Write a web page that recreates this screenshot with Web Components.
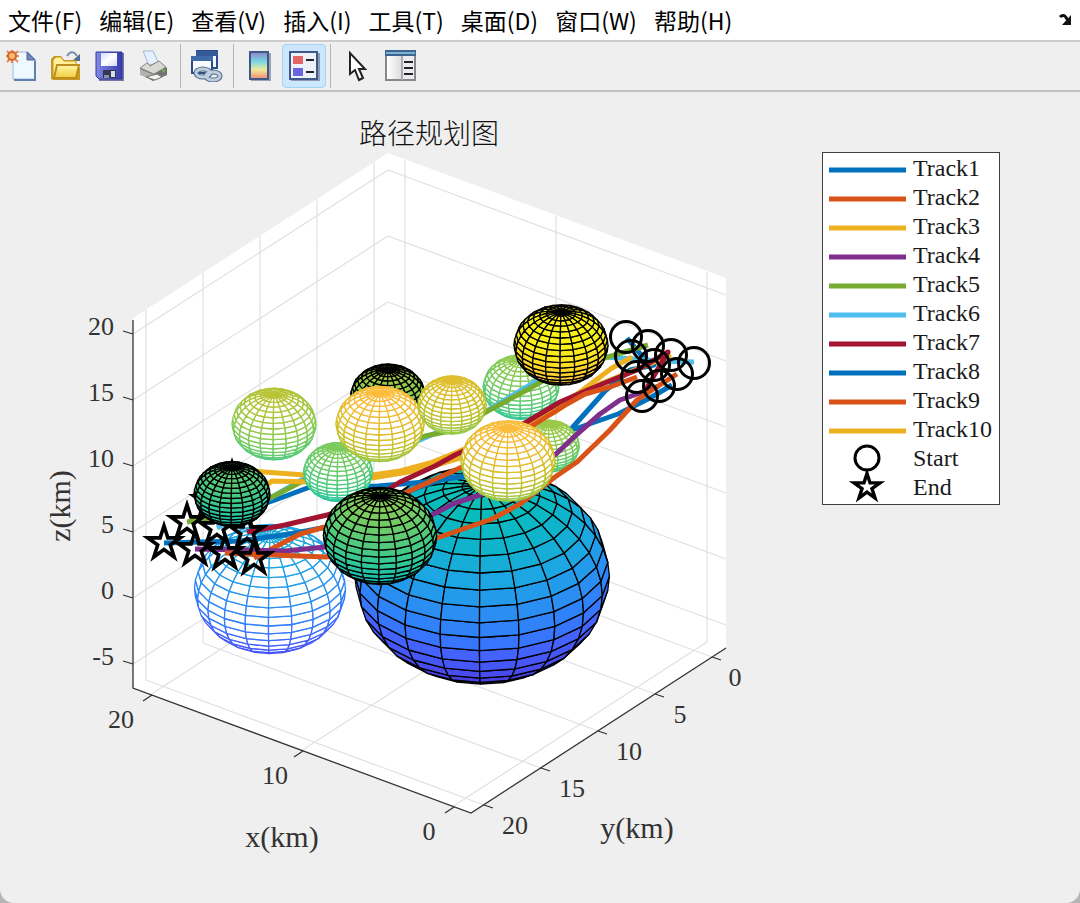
<!DOCTYPE html>
<html lang="zh-CN">
<head>
<meta charset="utf-8">
<title>Figure 1</title>
<style>
  body {
    margin: 0;
    background: #b4b4b4;
    font-family: "Noto Sans CJK SC", "Open Sans", sans-serif;
  }
</style>
</head>
<body>
<figure-window>
  <menu-bar slot="menu">
    <menu-item>文件(F)</menu-item>
    <menu-item>编辑(E)</menu-item>
    <menu-item>查看(V)</menu-item>
    <menu-item>插入(I)</menu-item>
    <menu-item>工具(T)</menu-item>
    <menu-item>桌面(D)</menu-item>
    <menu-item>窗口(W)</menu-item>
    <menu-item>帮助(H)</menu-item>
  </menu-bar>
  <tool-bar slot="tools">
    <tool-button icon="new" label="新建图窗"></tool-button>
    <tool-button icon="open" label="打开文件"></tool-button>
    <tool-button icon="save" label="保存图窗"></tool-button>
    <tool-button icon="print" label="打印图窗"></tool-button>
    <tool-separator></tool-separator>
    <tool-button icon="link" label="链接绘图"></tool-button>
    <tool-separator></tool-separator>
    <tool-button icon="colorbar" label="插入颜色栏"></tool-button>
    <tool-button icon="legend" label="插入图例" pressed></tool-button>
    <tool-separator></tool-separator>
    <tool-button icon="cursor" label="编辑绘图"></tool-button>
    <tool-button icon="inspector" label="属性检查器"></tool-button>
  </tool-bar>
  <path-plot></path-plot>
  <plot-legend slot="legend">
    <legend-entry color="#0072bd">Track1</legend-entry>
    <legend-entry color="#d95319">Track2</legend-entry>
    <legend-entry color="#edb120">Track3</legend-entry>
    <legend-entry color="#7e2f8e">Track4</legend-entry>
    <legend-entry color="#77ac30">Track5</legend-entry>
    <legend-entry color="#4dbeee">Track6</legend-entry>
    <legend-entry color="#a2142f">Track7</legend-entry>
    <legend-entry color="#0072bd">Track8</legend-entry>
    <legend-entry color="#d95319">Track9</legend-entry>
    <legend-entry color="#edb120">Track10</legend-entry>
    <legend-entry marker="circle">Start</legend-entry>
    <legend-entry marker="star">End</legend-entry>
  </plot-legend>
</figure-window>

<script>
const ICONS = {
  new: `
    <path d="M8 3h15l7 7v21H8z" fill="#8997b5"/>
    <path d="M7 2h15l7 7v20H7z" fill="#eef8ff" stroke="#9dbbdd"/>
    <path d="M21 2v8h8z" fill="#7588bd" stroke="#536291"/>
    <path d="M29 11v19H8" fill="none" stroke="#5f7fae" stroke-width="2"/>
    <g stroke="#e98a55" stroke-width="2"><path d="M6 0v13M0 6h13M1 1l11 11M12 1L1 12"/></g>
    <circle cx="6" cy="6" r="4" fill="#f6bd69" stroke="#d8632e" stroke-width="2"/>`,
  open: `
    <path d="M17 6c3-5 7-5 10 0" fill="none" stroke="#7890aa" stroke-width="2"/>
    <path d="M30 4v7h-8z" fill="#526d8d"/>
    <path d="M1 29V9l3-3h7l3 4h12v6l4 2v12H3z" fill="#c79a22"/>
    <path d="M3 26V10l3-3h5l3 4h12v7" fill="#fff099" stroke="#c39425"/>
    <path d="M7 15h22l-3 13H4z" fill="url(#open-fill)" stroke="#bd8e1e" stroke-width="2"/>
    <defs><linearGradient id="open-fill" x2="0" y2="1"><stop stop-color="#fff7a8"/><stop offset="1" stop-color="#f1cc3d"/></linearGradient></defs>`,
  save: `
    <path d="M3 3h27v28H5z" fill="#7478a3"/>
    <path d="M2 2h26v27H5l-3-3z" fill="url(#save-fill)" stroke="#3437a0"/>
    <path d="M7 3h16v13H7z" fill="url(#save-label)"/>
    <path d="M9 20h13v8H9z" fill="#343752"/><path d="M17 21h4v6h-4z" fill="#d7e0ed"/><path d="M10 25h5v3h-5z" fill="#8b92a8"/>
    <defs><linearGradient id="save-fill"><stop stop-color="#8389e8"/><stop offset="1" stop-color="#353ba8"/></linearGradient>
    <linearGradient id="save-label" x2="1" y2="1"><stop stop-color="#c8e0ff"/><stop offset=".5" stop-color="#fff"/><stop offset="1" stop-color="#d0d8f4"/></linearGradient></defs>`,
  print: `
    <path d="M5 1h10l6 13-9 4z" fill="#e3f0ff" stroke="#a5b9d2"/>
    <path d="M2 19l7-6 3 2 9-4 8 7v7l-14 6-13-7z" fill="#6d6d68"/>
    <path d="M2 18l7-5 3 3 9-5 7 6-12 7z" fill="#d9d9d4" stroke="#898984"/>
    <path d="M2 19l14 6v5L2 25z" fill="#b4b4af"/><path d="M16 25l12-7v7l-12 5z" fill="#777772"/>
    <path d="M8 27l9 3 7-3-5-3z" fill="#f4f4ef" stroke="#777"/><path d="M24 20l3 1" stroke="#74b942" stroke-width="2"/>`,
  link: `
    <path d="M6 1h20v17H6z" fill="#f6f8fc" stroke="#294c8b" stroke-width="2"/><path d="M5 1h22v5H5z" fill="#36599a"/>
    <path d="M1 7h20v16H1z" fill="#f9fbff" stroke="#294c8b" stroke-width="2"/><path d="M0 6h22v5H0z" fill="#416aa9"/>
    <g fill="none" stroke="#526985" stroke-width="5"><ellipse cx="12" cy="23" rx="7" ry="4"/><ellipse cx="22" cy="26" rx="7" ry="4"/></g>
    <g fill="none" stroke="#bdcde0" stroke-width="3"><ellipse cx="12" cy="23" rx="7" ry="4"/><ellipse cx="22" cy="26" rx="7" ry="4"/></g>`,
  colorbar: `
    <path d="M7 3h20v28H7z" fill="#9aa3b2"/>
    <path d="M6 2h18v27H6z" fill="url(#bar-fill)" stroke="#405888" stroke-width="2"/>
    <defs><linearGradient id="bar-fill" x2="0" y2="1"><stop stop-color="#8f83cb"/><stop offset=".35" stop-color="#79d6e5"/><stop offset=".65" stop-color="#f0e99a"/><stop offset="1" stop-color="#ef8b70"/></linearGradient></defs>`,
  legend: `
    <path d="M3 3h29v28H3z" fill="#8d9ab0"/>
    <path d="M2 2h27v27H2z" fill="#edf1fa" stroke="#405888" stroke-width="2"/>
    <path d="M5 6h10v8H5z" fill="#e46564"/><path d="M5 18h10v8H5z" fill="#6867dd"/>
    <path d="M18 10h8M18 22h8" stroke="#222" stroke-width="2"/>`,
  cursor: `<path d="M9 3v21l5-4 4 10 4-2-4-9h6z" fill="#fff" stroke="#222" stroke-width="2"/>`,
  inspector: `
    <path d="M1 1h29v29H1z" fill="#ececec" stroke="#85878c" stroke-width="2"/>
    <path d="M0 0h31v6H0z" fill="#3d668e"/><path d="M1 2h29v2H1z" fill="#7fb0d3"/>
    <path d="M2 6h14v23H2z" fill="url(#pane)"/><path d="M17 6v24" stroke="#a8abb2" stroke-width="2"/>
    <path d="M19 12h9M19 18h9M19 24h9" stroke="#222" stroke-width="2"/>
    <defs><linearGradient id="pane"><stop stop-color="#fff"/><stop offset="1" stop-color="#ddd"/></linearGradient></defs>`
};

const STAR = '0,-20 4.5,-6 19,-6 7.3,2.4 11.8,16.2 0,7.6 -11.8,16.2 -7.3,2.4 -19,-6 -4.5,-6';

/**
 * Base class: renders the class's static template into an open shadow root.
 */
class FigureElement extends HTMLElement {
  constructor() {
    super();
    this.attachShadow({mode: 'open'});
    this.shadowRoot.innerHTML = this.constructor.template;
  }
}

class FigureWindow extends FigureElement {
  static get template() {
    return `
      <style>
        :host {
          display: flex;
          flex-direction: column;
          min-height: 100vh;
          background: #efefef;
          border-radius: 0 0 14px 14px;
        }
        main {
          display: flex;
          align-items: flex-start;
          padding-right: 80px;
        }
        ::slotted(path-plot) { flex: 1; min-width: 0; }
        ::slotted(plot-legend) { margin-top: 60px; }
      </style>
      <slot name="menu"></slot>
      <slot name="tools"></slot>
      <main><slot></slot><slot name="legend"></slot></main>`;
  }
}

class MenuBar extends FigureElement {
  static get template() {
    return `
      <style>
        :host {
          display: flex;
          justify-content: space-between;
          align-items: center;
          height: 40px;
          padding: 0 6px 0 8px;
          background: #fff;
          border-bottom: 2px solid #cdcdcd;
        }
        nav { display: flex; gap: 17px; }
        button { padding: 0; border: 0; background: none; }
        svg { display: block; }
      </style>
      <nav aria-label="菜单"><slot></slot></nav>
      <button aria-label="停靠图窗">
        <svg width="16" height="16" viewBox="0 0 16 16">
          <path d="M2 5q4-4 7 2l3 2" fill="none" stroke="#111" stroke-width="3"/>
          <path d="M13 3v10H4z" fill="#111"/>
        </svg>
      </button>`;
  }
}

class MenuItem extends FigureElement {
  static get template() {
    return `
      <style>
        :host { display: block; }
        button {
          padding: 0;
          border: 0;
          background: none;
          color: #000;
          font: inherit;
          font-size: 23px;
          line-height: 38px;
          white-space: nowrap;
        }
      </style>
      <button><slot></slot></button>`;
  }
}

class ToolBar extends FigureElement {
  static get template() {
    return `
      <style>
        :host {
          display: flex;
          align-items: center;
          height: 48px;
          border-bottom: 2px solid #c2c2c2;
        }
      </style>
      <slot></slot>`;
  }
}

class ToolSeparator extends FigureElement {
  static get template() {
    return `
      <style>
        :host { width: 9px; height: 44px; }
        div { width: 1px; height: 100%; margin: 0 auto; background: #b5b5b5; }
      </style>
      <div></div>`;
  }
}

class ToolButton extends FigureElement {
  static get template() {
    return `
      <style>
        :host { display: block; }
        button {
          display: grid;
          place-items: center;
          box-sizing: border-box;
          width: 44px;
          height: 44px;
          padding: 0;
          border: 1px solid transparent;
          border-radius: 4px;
          background: none;
        }
        :host([pressed]) button { background: #cce6fd; border-color: #a3d2f6; }
      </style>
      <button><svg width="32" height="32" viewBox="0 0 32 32"></svg></button>`;
  }

  connectedCallback() {
    const button = this.shadowRoot.querySelector('button');
    button.setAttribute('aria-label', this.getAttribute('label'));
    button.setAttribute('aria-pressed', this.hasAttribute('pressed'));
    button.firstChild.innerHTML = ICONS[this.getAttribute('icon')];
  }
}

class PlotLegend extends FigureElement {
  static get template() {
    return `
      <style>
        :host {
          display: block;
          box-sizing: border-box;
          width: 178px;
          padding: 1px 6px 2px;
          border: 1px solid #404040;
          background: #fff;
        }
      </style>
      <slot></slot>`;
  }
}

class LegendEntry extends FigureElement {
  static get template() {
    return `
      <style>
        :host {
          display: flex;
          align-items: center;
          gap: 7px;
          height: 29px;
          color: #1a1a1a;
          font: 24px/29px "Liberation Serif", serif;
        }
        svg { flex: none; overflow: visible; }
      </style>
      <svg width="77" height="29" viewBox="0 0 77 29"></svg>
      <span><slot></slot></span>`;
  }

  connectedCallback() {
    const marker = this.getAttribute('marker');
    const svg = this.shadowRoot.querySelector('svg');
    if (marker === 'circle') {
      svg.innerHTML = '<circle cx="38" cy="14" r="12" fill="none" stroke="#000" stroke-width="3"/>';
    } else if (marker === 'star') {
      svg.innerHTML = `<polygon points="${STAR}" transform="translate(38 14) scale(.68)" fill="none" stroke="#000" stroke-width="5"/>`;
    } else {
      svg.innerHTML = `<path d="M0 16h77" stroke="${this.getAttribute('color')}" stroke-width="5"/>`;
    }
  }
}

// Screen vectors of one km along each axis
const EX = [-15.05, -5.6];
const EY = [-11.4, 7.38];
const EZ = -13.24;

const PARULA = [
  [0, 62, 38, 168], [.1, 72, 66, 231], [.15, 71, 84, 246], [.2, 67, 98, 254],
  [.25, 52, 122, 253], [.3, 46, 135, 247], [.4, 27, 167, 225], [.5, 8, 188, 188],
  [.6, 63, 202, 137], [.7, 140, 203, 80], [.8, 209, 191, 39], [.88, 254, 188, 60],
  [1, 249, 240, 25]
];

const parula = t => {
  t = Math.min(1, Math.max(0, t));
  const i = Math.max(1, PARULA.findIndex(s => s[0] >= t));
  const a = PARULA[i - 1];
  const b = PARULA[i];
  const k = (t - a[0]) / (b[0] - a[0]);
  return `rgb(${[1, 2, 3].map(c => Math.round(a[c] + (b[c] - a[c]) * k))})`;
};

/**
 * Draws a 20x20 sphere, front faces only.
 * @param {Number} cx Centre
 * @param {Number} cy Centre
 * @param {Number} r Radius in km
 * @param {Number} level Colormap position of the centre
 * @param {Boolean} solid Filled faces with black edges, or a coloured mesh
 */
const sphere = (cx, cy, r, level, solid) => {
  const n = 20;
  const point = (i, j) => {
    const lat = -Math.PI / 2 + i * Math.PI / n;
    const lon = j * 2 * Math.PI / n;
    const x = Math.cos(lat) * Math.cos(lon) * r;
    const y = Math.cos(lat) * Math.sin(lon) * r;
    return [cx + x * EX[0] + y * EY[0], cy + x * EX[1] + y * EY[1] + Math.sin(lat) * r * EZ];
  };
  let out = '';
  for (let i = 0; i < n; i++) {
    const t = level + r / 26 * Math.sin(-Math.PI / 2 + (i + .5) * Math.PI / n);
    for (let j = 0; j < n; j++) {
      const p = [point(i, j), point(i, j + 1), point(i + 1, j + 1), point(i + 1, j)];
      let area = 0;
      p.forEach((a, k) => {
        const b = p[(k + 1) % 4];
        area += a[0] * b[1] - a[1] * b[0];
      });
      if (area > 0) continue;
      const pts = p.map(q => q.map(v => v.toFixed(1)).join()).join(' ');
      const color = parula(t);
      out += `<polygon points="${pts}" fill="${solid ? color : '#fff'}" stroke="${solid ? '#000' : color}"/>`;
    }
  }
  return `<g stroke-width="${solid ? 1.3 : 1.3}" stroke-linejoin="round">${out}</g>`;
};

const track = (color, points) =>
  `<polyline points="${points}" fill="none" stroke="${color}" stroke-width="5" stroke-linejoin="round"/>`;

const line = (x1, y1, x2, y2) => `M${x1} ${y1}L${x2} ${y2}`;

const grid = () => {
  let d = '';
  // y lines: left wall and floor
  for (const k of [0, 1, 2, 3, 4]) {
    const x = 146 + 57 * k;
    const y = 680 - 37 * k;
    d += line(x, y, x, y - 370) + line(x, y, x + 338, y + 125);
  }
  // x lines: right wall and floor
  for (const k of [0, 1, 2]) {
    const x = 405 + 151 * k;
    const y = 530 + 56 * k;
    d += line(x, y, x, y - 370) + line(x, y, x - 255, y + 165);
  }
  // z lines on both walls
  for (const k of [0, 1, 2, 3, 4, 5]) {
    const y = 664 - 66 * k;
    d += line(133, y, 388, y - 164) + line(388, y - 164, 726, y - 39);
  }
  return `<path d="${d}" fill="none" stroke="#262626" stroke-opacity=".14" stroke-width="1.2"/>`;
};

const axes = () => {
  let d = 'M133 320V688L471 813L726 648';
  for (const k of [0, 1, 2, 3, 4, 5]) d += line(133, 664 - 66 * k, 123, 661 - 66 * k);
  for (const k of [0, 1, 2]) d += line(152 + 151 * k, 695 + 56 * k, 143 + 151 * k, 701 + 56 * k);
  for (const k of [0, 1, 2, 3, 4]) d += line(484 + 57 * k, 805 - 37 * k, 493 + 57 * k, 808 - 37 * k);
  return `<path d="${d}" fill="none" stroke="#333" stroke-width="1.3"/>`;
};

const labels = () => {
  const z = [-5, 0, 5, 10, 15, 20].map((v, k) => `<text x="114" y="${665 - 66 * k}" text-anchor="end">${v}</text>`);
  const x = [20, 10, 0].map((v, k) => `<text x="${121 + 154 * k}" y="${728 + 56 * k}" text-anchor="middle">${v}</text>`);
  const y = [20, 15, 10, 5, 0].map((v, k) => `<text x="${515 + (k < 3 ? 57 : 55) * k}" y="${834 - 37 * k}" text-anchor="middle">${v}</text>`);
  return z.concat(x, y).join('');
};

const BLUE = '#0072bd';
const ORANGE = '#d95319';
const YELLOW = '#edb120';

const ENDS = [
  [232, 480], [210, 501], [187, 522], [164, 543], [240, 507],
  [217, 528], [195, 549], [247, 532], [225, 553], [254, 558]
];
const STARTS = [
  [626, 337], [648, 346], [671, 355], [694, 363], [631, 356],
  [654, 365], [677, 374], [637, 377], [659, 386], [642, 396]
];

class PathPlot extends FigureElement {
  static get template() {
    return `
      <style>
        :host { display: block; }
        svg {
          display: block;
          width: 100%;
          height: auto;
          fill: #333;
          font: 26px "Liberation Serif", serif;
        }
        .label { font-size: 30px; }
        .title { font: 300 28px "Liberation Serif", "Noto Sans CJK SC", serif; fill: #111; }
      </style>
      <svg viewBox="0 92 822 811" role="img" aria-label="路径规划图">
        <path d="M133 688V318L388 153L726 278V648L471 813z" fill="#fff"/>
        ${grid()}
        ${axes()}
        ${labels()}
        <text class="title" x="429" y="144" text-anchor="middle">路径规划图</text>
        <text class="label" x="282" y="847" text-anchor="middle">x(km)</text>
        <text class="label" x="637" y="838" text-anchor="middle">y(km)</text>
        <text class="label" transform="translate(70 506) rotate(-90)" text-anchor="middle">z(km)</text>
        ${sphere(482, 575, 6.75, .26, true)}
        ${sphere(270, 589, 4, .26, false)}
        ${sphere(274, 424, 2.22, .68, false)}
        ${sphere(521, 387, 2, .63, false)}
        ${track(BLUE, '627,338 642,356 654,365 630,370 605,391 572,428 540,450 490,472 455,477 425,482 378,486 310,487 275,500 232,515')}
        ${track(BLUE, '672,385 650,398 618,414 572,430 540,452 505,468 480,474 440,480 370,505 327,527 290,534 240,541 164,543')}
        ${sphere(549, 446, 1.6, .66, false)}
        ${sphere(388, 396, 1.98, .66, true)}
        ${track('#4dbeee', '694,362 660,361 606,357 580,362 535,382 490,409 420,440 380,456 305,478 272,497 217,528')}
        ${track('#77ac30', '648,345 608,357 580,367 548,378 525,391 486,412 455,430 425,436 380,455 305,480 272,497 210,518 187,522')}
        ${track(YELLOW, '632,357 612,368 580,392 550,412 455,453 430,463 400,471 372,475 305,475 250,471 232,480')}
        ${track(YELLOW, '671,355 630,372 590,388 555,412 460,458 420,470 372,478 310,482 272,481 240,507')}
        ${track('#a2142f', '642,396 668,352 637,370 590,389 560,402 525,423 455,455 435,466 400,482 375,498 327,515 285,525 247,532')}
        ${track(ORANGE, '637,377 610,387 585,394 567,404 535,424 462,467 405,493 370,510 325,527 300,534 254,558')}
        ${track('#7e2f8e', '659,386 640,393 620,400 600,414 575,436 556,454 520,480 480,495 455,503 430,516 380,538 325,547 285,551 195,549')}
        ${track(ORANGE, '677,374 655,388 637,400 610,430 577,462 555,477 520,504 492,519 437,538 390,550 326,557 225,553')}
        ${ENDS.map(([x, y]) => `<polygon points="${STAR}" transform="translate(${x} ${y}) scale(.86)" fill="none" stroke="#000" stroke-width="4.2"/>`).join('')}
        ${STARTS.map(([x, y]) => `<circle cx="${x}" cy="${y}" r="15.5" fill="none" stroke="#000" stroke-width="3"/>`).join('')}
        ${sphere(338, 472, 1.82, .61, false)}
        ${sphere(380, 424, 2.33, .79, false)}
        ${sphere(452, 405, 1.8, .76, false)}
        ${sphere(232, 494, 2.01, .57, true)}
        ${sphere(508, 461, 2.49, .78, false)}
        ${sphere(380, 536, 3, .58, true)}
        ${sphere(561, 345, 2.49, .95, true)}
      </svg>`;
  }
}

customElements.define('figure-window', FigureWindow);
customElements.define('menu-bar', MenuBar);
customElements.define('menu-item', MenuItem);
customElements.define('tool-bar', ToolBar);
customElements.define('tool-separator', ToolSeparator);
customElements.define('tool-button', ToolButton);
customElements.define('plot-legend', PlotLegend);
customElements.define('legend-entry', LegendEntry);
customElements.define('path-plot', PathPlot);
</script>
</body>
</html>
